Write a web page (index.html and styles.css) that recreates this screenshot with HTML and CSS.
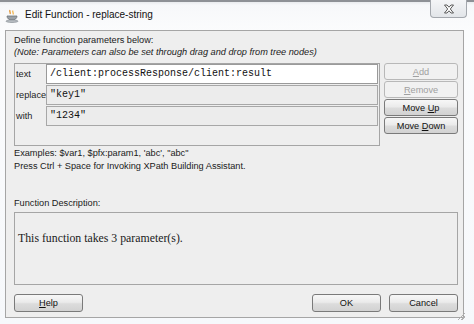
FILE: index.html
```html
<!DOCTYPE html>
<html>
<head>
<meta charset="utf-8">
<link rel="stylesheet" href="styles.css">
</head>
<body>
<div class="window">
  <div class="titlebar">
    <svg class="app-icon" width="14" height="14" viewBox="0 0 14 14">
      <path d="M5 1c-1 1.5 1 2.5 0 4" stroke="#e08a1e" stroke-width="1.2" fill="none"/>
      <path d="M8 1.5c-1 1.5 1 2.5 0 4" stroke="#f0b040" stroke-width="1.2" fill="none"/>
      <path d="M2 7h10c0 2.5-2 4-5 4s-5-1.5-5-4z" fill="#9aa0a6" stroke="#6d737a" stroke-width="0.8"/>
      <ellipse cx="7" cy="12.2" rx="6" ry="1.3" fill="#b9bec3" stroke="#7b8188" stroke-width="0.6"/>
    </svg>
    <span class="title">Edit Function - replace-string</span>
    <div class="close">
      <svg width="12" height="10" viewBox="0 0 12 10">
        <path d="M1.5 1h2.5l2 2.2 2-2.2h2.5l-3.2 4 3.2 4h-2.5l-2-2.2-2 2.2h-2.5l3.2-4z" fill="#fff" stroke="#4a4a4a" stroke-width="0.9" stroke-linejoin="round"/>
      </svg>
    </div>
  </div>
  <div class="panel">
    <div class="intro">Define function parameters below:</div>
    <div class="note">(Note: Parameters can also be set through drag and drop from tree nodes)</div>
    <div class="params">
      <div class="grid">
        <div class="row"><span class="label">text</span><span class="cell active">/client:processResponse/client:result</span></div>
        <div class="row"><span class="label">replace</span><span class="cell">"key1"</span></div>
        <div class="row"><span class="label">with</span><span class="cell">"1234"</span></div>
      </div>
      <div class="side">
        <button class="btn disabled"><u>A</u>dd</button>
        <button class="btn disabled"><u>R</u>emove</button>
        <button class="btn">Move <u>U</u>p</button>
        <button class="btn">Move <u>D</u>own</button>
      </div>
    </div>
    <div class="hint">Examples: $var1, $pfx:param1, 'abc', "abc"<br>Press Ctrl + Space for Invoking XPath Building Assistant.</div>
    <div class="desc-label">Function Description:</div>
    <div class="desc">This function takes 3 parameter(s).</div>
    <div class="footer">
      <button class="btn wide"><u>H</u>elp</button>
      <span class="spacer"></span>
      <button class="btn wide">OK</button>
      <button class="btn wide">Cancel</button>
    </div>
  </div>
  <div class="grip"></div>
</div>
</body>
</html>
```

FILE: styles.css
```css
* { box-sizing: border-box; }
html, body { margin: 0; padding: 0; }
body {
  width: 474px;
  height: 324px;
  overflow: hidden;
  font-family: "Liberation Sans", Arial, sans-serif;
  font-size: 9.2px;
  color: #1a1a1a;
}
.window {
  position: relative;
  width: 474px;
  height: 324px;
  background: linear-gradient(180deg, #e9ebee 0px, #f7f8fa 3px, #fbfcfd 30px, #f6f8fb 100%);
  border-top: 2px solid #8e9196;
  display: flex;
  flex-direction: column;
}
.titlebar {
  height: 28px;
  display: flex;
  align-items: flex-start;
  padding-left: 5px;
}
.app-icon { margin-top: 7px; }
.title {
  margin-left: 6px;
  margin-top: 7px;
  font-size: 10px;
  color: #111;
}
.close {
  margin-left: auto;
  margin-right: 7px;
  margin-top: -2px;
  width: 37px;
  height: 18px;
  border: 1px solid #a3a7ad;
  border-top: none;
  border-radius: 0 0 4px 4px;
  background: linear-gradient(180deg, #f4f5f7, #e2e5e9);
  display: flex;
  align-items: center;
  justify-content: center;
}
.panel {
  margin: 0 10px 0 5px;
  height: 288px;
  border: 1px solid #a5a5a5;
  background: #eeeeee;
  padding: 3px 5px 0 8px;
  display: flex;
  flex-direction: column;
}
.intro, .note { line-height: 12px; }
.note { font-style: italic; }
.params {
  margin-top: 5px;
  display: flex;
  gap: 4px;
}
.grid {
  width: 366px;
  height: 83px;
  border: 1px solid #a5a5a5;
}
.row {
  display: flex;
  height: 20px;
  margin-bottom: 1px;
}
.label {
  width: 31px;
  line-height: 20px;
  padding-left: 1px;
  color: #222;
  white-space: nowrap;
}
.cell {
  flex: 1;
  margin-right: 1px;
  border: 1px solid #a7a7a7;
  font-family: "Liberation Mono", "Courier New", monospace;
  font-size: 10px;
  line-height: 18px;
  padding-left: 3px;
  color: #111;
  background: #ececec;
}
.cell.active { background: #fff; border-color: #9a9a9a; }
.side {
  width: 74px;
  display: flex;
  flex-direction: column;
  gap: 1px;
}
.btn {
  font-family: "Liberation Sans", Arial, sans-serif;
  font-size: 9.2px;
  color: #111;
  height: 17px;
  padding: 0;
  border: 1px solid #7a7a7a;
  border-radius: 3px;
  background: linear-gradient(180deg, #f7f7f7 0%, #ebebeb 45%, #dcdcdc 55%, #d2d2d2 100%);
}
.btn u { text-decoration-thickness: 1px; text-underline-offset: 1px; }
.btn.disabled {
  color: #a0a0a0;
  border-color: #b8b8b8;
  background: #f1f1f1;
}
.hint {
  margin-top: 1px;
  line-height: 12.5px;
}
.desc-label {
  margin-top: 25px;
  line-height: 12px;
}
.desc {
  margin-top: 3px;
  height: 73px;
  border: 1px solid #a5a5a5;
  padding: 18px 0 0 3px;
  font-family: "Liberation Serif", "Times New Roman", serif;
  font-size: 11.8px;
}
.footer {
  margin-top: 9px;
  display: flex;
  gap: 8px;
}
.spacer { flex: 1; }
.btn.wide { width: 69px; height: 18px; }
.grip {
  position: absolute;
  right: 9px;
  bottom: 4px;
  width: 8px;
  height: 8px;
  background: linear-gradient(135deg, transparent 55%, #b0b0b0 55%, #b0b0b0 62%, transparent 62%, transparent 75%, #b0b0b0 75%, #b0b0b0 82%, transparent 82%);
}
```
